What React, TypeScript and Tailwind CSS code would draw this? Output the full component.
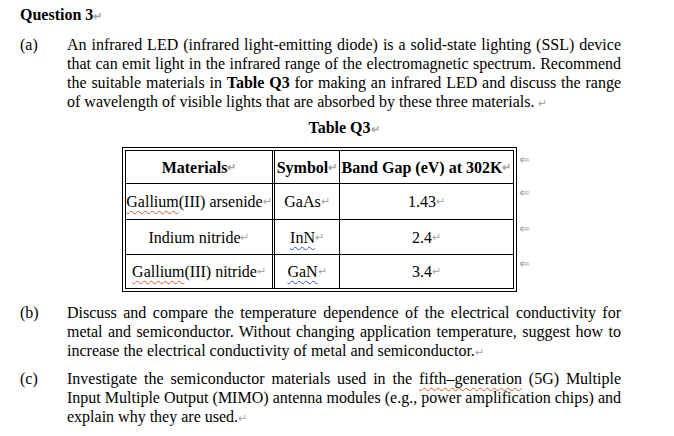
import React from "react";

const Mark = () => <span className="text-[#a6a6a6] text-[11px] leading-none">↵</span>;
const RowMark = () => <span className="text-[#a6a6a6] text-[13px] leading-none">⇐</span>;

const Line = ({ children, last = false }: { children: React.ReactNode; last?: boolean }) => (
  <div className={last ? "text-left whitespace-nowrap" : "text-justify [text-align-last:justify]"}>{children}</div>
);

const Orange = ({ children }: { children: React.ReactNode }) => (
  <span className="underline decoration-wavy decoration-[#c8622a] decoration-1 underline-offset-[3px]">{children}</span>
);
const Blue = ({ children }: { children: React.ReactNode }) => (
  <span className="underline decoration-wavy decoration-[#2f4fd8] decoration-1 underline-offset-[3px]">{children}</span>
);

export default function App() {
  const rows = [
    { h: "h-[36px]", m: <><Orange>Gallium</Orange>(III) arsenide</>, s: <>GaAs</>, b: "1.43" },
    { h: "h-[35px]", m: <>Indium nitride</>, s: <Blue>InN</Blue>, b: "2.4" },
    { h: "h-[33px]", m: <><Orange>Gallium</Orange>(III) nitride</>, s: <Blue>GaN</Blue>, b: "3.4" },
  ];
  return (
    <div className="w-[674px] h-[436px] bg-white overflow-hidden text-black font-['Liberation_Serif',serif] text-[16px] leading-[19px]">
      <div className="pl-[20px] pt-[5px]">
        <div className="font-bold">
          Question 3<Mark />
        </div>

        <div className="flex mt-[11px]">
          <div className="w-[47px]">(a)</div>
          <div className="w-[554px]">
            <Line>An infrared LED (infrared light-emitting diode) is a solid-state lighting (SSL) device</Line>
            <Line>that can emit light in the infrared range of the electromagnetic spectrum. Recommend</Line>
            <Line>
              the suitable materials in <b>Table Q3</b> for making an infrared LED and discuss the range
            </Line>
            <Line last>
              of wavelength of visible lights that are absorbed by these three materials. <Mark />
            </Line>
            <div className="mt-[7px] text-center font-bold">
              Table Q3<Mark />
            </div>

            <div className="flex mt-[10px] ml-[55px]">
              <div className="border border-black p-[2px]">
                <div className="border border-black w-[389px]">
                  <div className="flex h-[33px] border-b border-black font-bold">
                    <div className="w-[149px] border-r-[3px] border-double border-black flex items-center justify-center">
                      Materials<Mark />
                    </div>
                    <div className="w-[65px] border-r border-black flex items-center justify-center overflow-hidden whitespace-nowrap">
                      Symbol<Mark />
                    </div>
                    <div className="flex-1 flex items-center justify-center whitespace-nowrap overflow-hidden">
                      Band Gap (eV) at 302K<Mark />
                    </div>
                  </div>
                  {rows.map((r, i) => (
                    <div key={i} className={`flex ${r.h} ${i < 2 ? "border-b border-black" : ""}`}>
                      <div className="w-[149px] border-r-[3px] border-double border-black flex items-center justify-center whitespace-nowrap overflow-hidden">
                        {r.m}
                        <Mark />
                      </div>
                      <div className="w-[65px] border-r border-black flex items-center justify-center">
                        {r.s}
                        <Mark />
                      </div>
                      <div className="flex-1 flex items-center justify-center">
                        {r.b}
                        <Mark />
                      </div>
                    </div>
                  ))}
                </div>
              </div>
              <div className="flex flex-col pt-[2px] ml-[2px]">
                <div className="h-[33px]"><RowMark /></div>
                <div className="h-[36px]"><RowMark /></div>
                <div className="h-[35px]"><RowMark /></div>
                <div className="h-[33px]"><RowMark /></div>
              </div>
            </div>
          </div>
        </div>

        <div className="flex mt-[11px]">
          <div className="w-[47px]">(b)</div>
          <div className="w-[554px]">
            <Line>Discuss and compare the temperature dependence of the electrical conductivity for</Line>
            <Line>metal and semiconductor. Without changing application temperature, suggest how to</Line>
            <Line last>
              increase the electrical conductivity of metal and semiconductor.<Mark />
            </Line>
          </div>
        </div>

        <div className="flex mt-[9px]">
          <div className="w-[47px]">(c)</div>
          <div className="w-[554px]">
            <Line>
              Investigate the semiconductor materials used in the <Orange>fifth–generation</Orange> (5G) Multiple
            </Line>
            <Line>Input Multiple Output (MIMO) antenna modules (e.g., power amplification chips) and</Line>
            <Line last>
              explain why they are used.<Mark />
            </Line>
          </div>
        </div>
      </div>
    </div>
  );
}
